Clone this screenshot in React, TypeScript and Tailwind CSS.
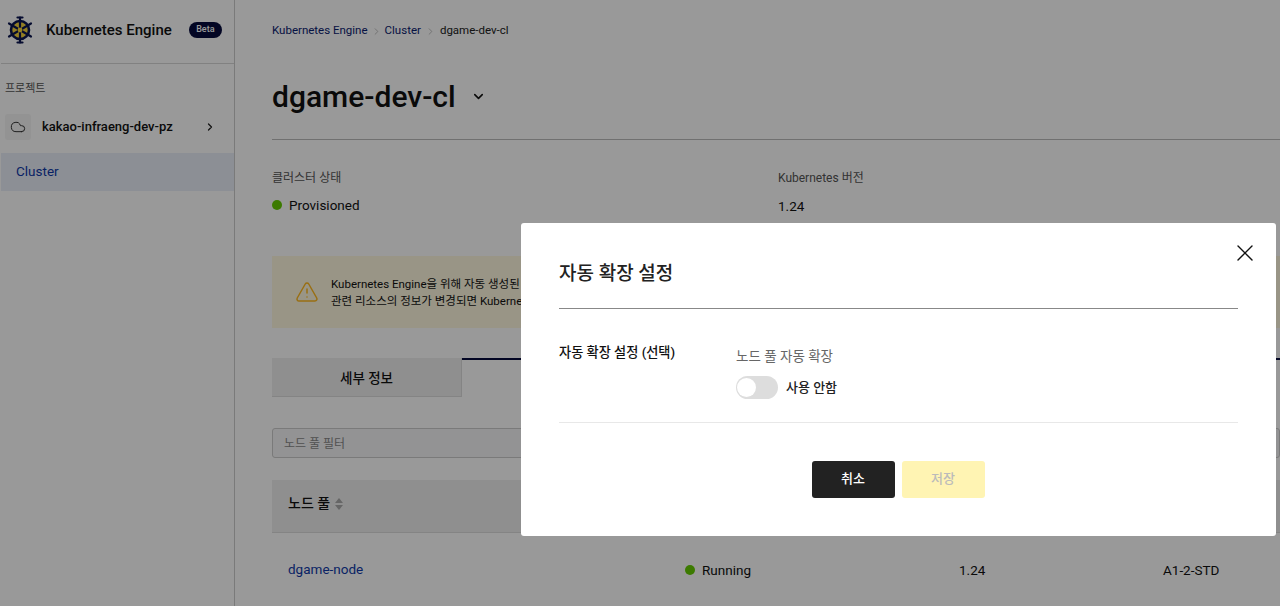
import { FC } from 'react';
import { ChevronDown, ChevronRight, Cloud, TriangleAlert, X } from 'lucide-react';

const font = { fontFamily: 'Roboto, "Noto Sans CJK KR", sans-serif' };

const Logo: FC = () => (
  <svg width="26" height="28" viewBox="0 0 26 28" fill="none">
    <circle cx="13" cy="14" r="9" fill="#f5d33c" stroke="#0a1550" strokeWidth="2.6" />
    <g stroke="#0a1550" strokeWidth="2.2" strokeLinecap="round">
      <path d="M13 1.5v25" />
      <path d="M2 7.5l22 13" />
      <path d="M24 7.5l-22 13" />
      <path d="M10.5 1.5h5" />
      <path d="M10.5 26.5h5" />
    </g>
    <circle cx="13" cy="14" r="2.4" fill="#f5d33c" />
  </svg>
);

const Sidebar: FC = () => (
  <aside className="w-[235px] shrink-0 border-r border-[#ccc] pl-px">
    <div className="flex h-[64px] items-center border-b border-[#d8d8d8] pb-[3px] pl-[6px]">
      <Logo />
      <span className="ml-[13px] text-[15px] font-medium leading-none text-[#111]">Kubernetes Engine</span>
      <span className="ml-[17px] flex h-[16px] w-[33px] items-center justify-center rounded-full bg-[#050b3c] text-[9px] font-medium text-white">
        Beta
      </span>
    </div>
    <p className="mt-[18px] pl-[4px] text-[11px] leading-[14px] text-[#555]">프로젝트</p>
    <div className="mt-[18px] flex items-center pl-[4px]">
      <span className="flex h-[26px] w-[26px] items-center justify-center rounded-[3px] bg-[#f5f5f5]">
        <Cloud size={16} strokeWidth={1.5} className="text-[#333]" />
      </span>
      <span className="ml-[11px] text-[13px] font-medium text-[#111]">kakao-infraeng-dev-pz</span>
      <ChevronRight size={12} strokeWidth={2.5} className="ml-[31px] text-[#222]" />
    </div>
    <div className="mt-[13px] flex h-[38px] items-center bg-[#e9eef8] pb-[2px] pl-[15px] text-[13.5px] text-[#0f3aa8]">Cluster</div>
  </aside>
);

const Main: FC = () => (
  <main className="min-w-0 flex-1 overflow-hidden pl-[37px]">
    <nav className="flex h-[60px] items-center pt-[2px] text-[11.5px] text-[#0b2170]">
      <span>Kubernetes Engine</span>
      <ChevronRight size={11} className="mx-[3px] text-[#bbb]" />
      <span>Cluster</span>
      <ChevronRight size={11} className="mx-[4px] text-[#bbb]" />
      <span className="text-[#222]">dgame-dev-cl</span>
    </nav>
    <div className="flex h-[80px] items-center border-b border-[#bbb] pb-[6px]">
      <h1 className="text-[30px] font-medium leading-none text-[#111]">dgame-dev-cl</h1>
      <ChevronDown size={15} strokeWidth={2.5} className="ml-[15px] text-[#111]" />
    </div>
    <div className="mt-[30px] grid grid-cols-[506px_1fr]">
      <div>
        <p className="text-[12px] leading-[16px] text-[#555]">클러스터 상태</p>
        <div className="mt-[9px] flex items-center text-[13.5px] leading-[20px] text-[#111]">
          <span className="h-[10px] w-[10px] rounded-full bg-[#64cc00]" />
          <span className="ml-[7px]">Provisioned</span>
        </div>
      </div>
      <div>
        <p className="text-[12px] leading-[16px] text-[#555]">Kubernetes 버전</p>
        <p className="mt-[10px] text-[13.5px] leading-[21px] text-[#111]">1.24</p>
      </div>
    </div>
    <div className="mt-[39px] flex h-[72px] items-center bg-[#fff8e0] pl-[23px]">
      <TriangleAlert size={24} strokeWidth={1.5} className="text-[#ffb91f]" />
      <div className="ml-[12px] mt-[2px] whitespace-nowrap text-[11.5px] leading-[17px] text-[#111]">
        <p>Kubernetes Engine을 위해 자동 생성된 리소스</p>
        <p>관련 리소스의 정보가 변경되면 Kubernetes</p>
      </div>
    </div>
    <div className="mt-[30px] flex h-[39px]">
      <div className="flex w-[190px] items-center justify-center border-b border-r border-[#ddd] bg-[#efefef] pt-[2px] text-[13.5px] font-medium text-[#111]">
        세부 정보
      </div>
      <div className="flex-1 border-t-2 border-[#050b3c]" />
    </div>
    <div className="mt-[31px] flex h-[30px] items-center rounded-[3px] border border-[#ccc] bg-[#f5f5f7] pl-[11px] pt-[2px] text-[12px] text-[#888]">
      노드 풀 필터
    </div>
    <div className="mt-[22px] flex h-[53px] items-center border-b border-[#ddd] bg-[#efefef] pb-[6px] pl-[16px] text-[14px] font-medium text-[#111]">
      노드 풀
      <svg width="8" height="12" viewBox="0 0 8 12" className="ml-[5px] mt-px" fill="#aaa">
        <path d="M4 0l4 5H0z" />
        <path d="M4 12L0 7h8z" />
      </svg>
    </div>
    <div className="grid h-[74px] grid-cols-[397px_274px_204px_1fr] items-center pl-[16px] text-[13.5px] text-[#111]">
      <span className="mb-[2px] text-[#0f3aa8]">dgame-node</span>
      <span className="flex items-center">
        <span className="h-[10px] w-[10px] rounded-full bg-[#64cc00]" />
        <span className="ml-[7px]">Running</span>
      </span>
      <span>1.24</span>
      <span>A1-2-STD</span>
    </div>
  </main>
);

const Dialog: FC = () => (
  <div className="fixed inset-0 bg-black/40 pl-[521px] pt-[223px]">
    <div className="relative h-[313px] w-[755px] rounded-[3px] bg-white px-[38px]">
      <button className="absolute right-[17px] top-[16px] text-[#111]">
        <X size={28} strokeWidth={1.2} />
      </button>
      <h2 className="flex h-[86px] items-center border-b border-[#888] pt-[18px] text-[19px] font-medium text-[#222]">
        자동 확장 설정
      </h2>
      <div className="flex h-[114px] border-b border-[#e8e8e8] pt-[35px]">
        <p className="w-[177px] text-[13.2px] font-medium leading-[18px] text-[#111]">자동 확장 설정 (선택)</p>
        <div>
          <p className="mt-[3px] text-[13.5px] leading-[18px] text-[#666]">노드 풀 자동 확장</p>
          <div className="mt-[11px] flex items-center">
            <span className="flex h-[23px] w-[42px] items-center rounded-full bg-[#ddd] pl-[1px]">
              <span className="h-[19px] w-[19px] rounded-full bg-white" />
            </span>
            <span className="ml-[8px] text-[13px] font-medium text-[#222]">사용 안함</span>
          </div>
        </div>
      </div>
      <div className="mt-[38px] flex justify-center gap-[7px] pr-[1px]">
        <button className="h-[37px] w-[83px] rounded-[3px] bg-[#222] pb-[2px] text-[13px] font-medium text-white">취소</button>
        <button className="h-[37px] w-[83px] rounded-[3px] bg-[#fff4b3] pb-[2px] text-[13px] font-medium text-[#bbb]">저장</button>
      </div>
    </div>
  </div>
);

export default function App() {
  return (
    <div className="flex h-[606px] w-[1280px] overflow-hidden bg-white" style={font}>
      <Sidebar />
      <Main />
      <Dialog />
    </div>
  );
}
